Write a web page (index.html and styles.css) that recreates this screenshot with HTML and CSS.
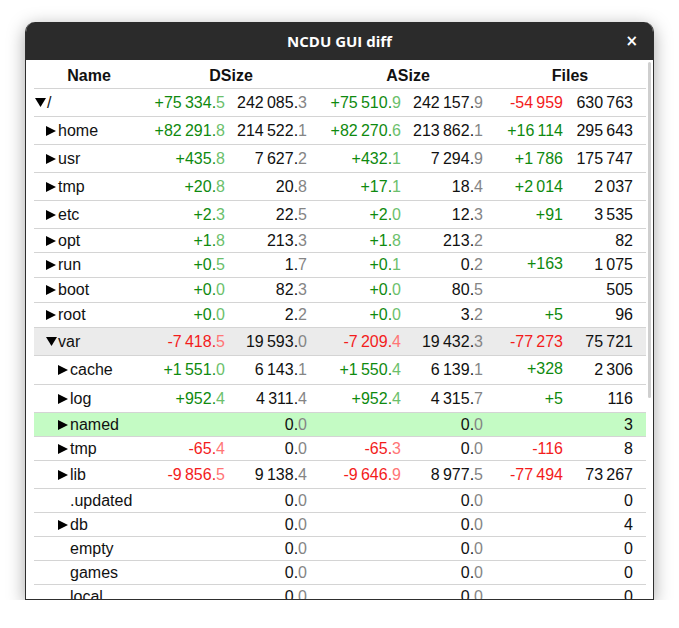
FILE: index.html
```html
<!DOCTYPE html>
<html lang="en">
<head>
    <meta charset="UTF-8">
    <meta name="viewport" content="width=device-width, initial-scale=1.0">
    <title>NCDU GUI diff</title>
    <link rel="stylesheet" href="styles.css">
</head>
<body>
    <div class="window">
        <div class="titlebar">
            <span></span>
            <span class="title">NCDU GUI diff</span>
            <span class="close">×</span>
        </div>

        <div class="content">
            <div class="tree">
                <div class="row head">
                    <div class="h-name">Name</div>
                    <div class="h-dsize">DSize</div>
                    <div class="h-asize">ASize</div>
                    <div class="h-files">Files</div>
                </div>

                <div class="row tall">
                    <div class="name"><span class="exp"><svg width="11" height="9" viewBox="0 0 11 9"><polygon points="0,0 11,0 5.5,9"/></svg></span>/</div>
                    <div class="c pos">+75&thinsp;334.<span class="fr">5</span></div>
                    <div class="c">242&thinsp;085.<span class="fr">3</span></div>
                    <div class="c pos">+75&thinsp;510.<span class="fr">9</span></div>
                    <div class="c">242&thinsp;157.<span class="fr">9</span></div>
                    <div class="c neg">-54&thinsp;959</div>
                    <div class="c">630&thinsp;763</div>
                </div>

                <div class="row tall">
                    <div class="name lvl1"><span class="exp"><svg width="10" height="10" viewBox="0 0 10 10"><polygon points="0,0 10,5 0,10"/></svg></span>home</div>
                    <div class="c pos">+82&thinsp;291.<span class="fr">8</span></div>
                    <div class="c">214&thinsp;522.<span class="fr">1</span></div>
                    <div class="c pos">+82&thinsp;270.<span class="fr">6</span></div>
                    <div class="c">213&thinsp;862.<span class="fr">1</span></div>
                    <div class="c pos">+16&thinsp;114</div>
                    <div class="c">295&thinsp;643</div>
                </div>

                <div class="row tall">
                    <div class="name lvl1"><span class="exp"><svg width="10" height="10" viewBox="0 0 10 10"><polygon points="0,0 10,5 0,10"/></svg></span>usr</div>
                    <div class="c pos">+435.<span class="fr">8</span></div>
                    <div class="c">7&thinsp;627.<span class="fr">2</span></div>
                    <div class="c pos">+432.<span class="fr">1</span></div>
                    <div class="c">7&thinsp;294.<span class="fr">9</span></div>
                    <div class="c pos">+1&thinsp;786</div>
                    <div class="c">175&thinsp;747</div>
                </div>

                <div class="row tall">
                    <div class="name lvl1"><span class="exp"><svg width="10" height="10" viewBox="0 0 10 10"><polygon points="0,0 10,5 0,10"/></svg></span>tmp</div>
                    <div class="c pos">+20.<span class="fr">8</span></div>
                    <div class="c">20.<span class="fr">8</span></div>
                    <div class="c pos">+17.<span class="fr">1</span></div>
                    <div class="c">18.<span class="fr">4</span></div>
                    <div class="c pos">+2&thinsp;014</div>
                    <div class="c">2&thinsp;037</div>
                </div>

                <div class="row tall">
                    <div class="name lvl1"><span class="exp"><svg width="10" height="10" viewBox="0 0 10 10"><polygon points="0,0 10,5 0,10"/></svg></span>etc</div>
                    <div class="c pos">+2.<span class="fr">3</span></div>
                    <div class="c">22.<span class="fr">5</span></div>
                    <div class="c pos">+2.<span class="fr">0</span></div>
                    <div class="c">12.<span class="fr">3</span></div>
                    <div class="c pos">+91</div>
                    <div class="c">3&thinsp;535</div>
                </div>

                <div class="row">
                    <div class="name lvl1"><span class="exp"><svg width="10" height="10" viewBox="0 0 10 10"><polygon points="0,0 10,5 0,10"/></svg></span>opt</div>
                    <div class="c pos">+1.<span class="fr">8</span></div>
                    <div class="c">213.<span class="fr">3</span></div>
                    <div class="c pos">+1.<span class="fr">8</span></div>
                    <div class="c">213.<span class="fr">2</span></div>
                    <div class="c"></div>
                    <div class="c">82</div>
                </div>

                <div class="row mid">
                    <div class="name lvl1"><span class="exp"><svg width="10" height="10" viewBox="0 0 10 10"><polygon points="0,0 10,5 0,10"/></svg></span>run</div>
                    <div class="c pos">+0.<span class="fr">5</span></div>
                    <div class="c">1.<span class="fr">7</span></div>
                    <div class="c pos">+0.<span class="fr">1</span></div>
                    <div class="c">0.<span class="fr">2</span></div>
                    <div class="c pos up">+163</div>
                    <div class="c">1&thinsp;075</div>
                </div>

                <div class="row mid">
                    <div class="name lvl1"><span class="exp"><svg width="10" height="10" viewBox="0 0 10 10"><polygon points="0,0 10,5 0,10"/></svg></span>boot</div>
                    <div class="c pos">+0.<span class="fr">0</span></div>
                    <div class="c">82.<span class="fr">3</span></div>
                    <div class="c pos">+0.<span class="fr">0</span></div>
                    <div class="c">80.<span class="fr">5</span></div>
                    <div class="c"></div>
                    <div class="c">505</div>
                </div>

                <div class="row mid">
                    <div class="name lvl1"><span class="exp"><svg width="10" height="10" viewBox="0 0 10 10"><polygon points="0,0 10,5 0,10"/></svg></span>root</div>
                    <div class="c pos">+0.<span class="fr">0</span></div>
                    <div class="c">2.<span class="fr">2</span></div>
                    <div class="c pos">+0.<span class="fr">0</span></div>
                    <div class="c">3.<span class="fr">2</span></div>
                    <div class="c pos">+5</div>
                    <div class="c">96</div>
                </div>

                <div class="row tall selected">
                    <div class="name lvl1"><span class="exp"><svg width="11" height="9" viewBox="0 0 11 9"><polygon points="0,0 11,0 5.5,9"/></svg></span>var</div>
                    <div class="c neg">-7&thinsp;418.<span class="fr">5</span></div>
                    <div class="c">19&thinsp;593.<span class="fr">0</span></div>
                    <div class="c neg">-7&thinsp;209.<span class="fr">4</span></div>
                    <div class="c">19&thinsp;432.<span class="fr">3</span></div>
                    <div class="c neg">-77&thinsp;273</div>
                    <div class="c">75&thinsp;721</div>
                </div>

                <div class="row taller">
                    <div class="name lvl2"><span class="exp"><svg width="10" height="10" viewBox="0 0 10 10"><polygon points="0,0 10,5 0,10"/></svg></span>cache</div>
                    <div class="c pos">+1&thinsp;551.<span class="fr">0</span></div>
                    <div class="c">6&thinsp;143.<span class="fr">1</span></div>
                    <div class="c pos">+1&thinsp;550.<span class="fr">4</span></div>
                    <div class="c">6&thinsp;139.<span class="fr">1</span></div>
                    <div class="c pos up">+328</div>
                    <div class="c">2&thinsp;306</div>
                </div>

                <div class="row tall">
                    <div class="name lvl2"><span class="exp"><svg width="10" height="10" viewBox="0 0 10 10"><polygon points="0,0 10,5 0,10"/></svg></span>log</div>
                    <div class="c pos">+952.<span class="fr">4</span></div>
                    <div class="c">4&thinsp;311.<span class="fr">4</span></div>
                    <div class="c pos">+952.<span class="fr">4</span></div>
                    <div class="c">4&thinsp;315.<span class="fr">7</span></div>
                    <div class="c pos">+5</div>
                    <div class="c">116</div>
                </div>

                <div class="row added">
                    <div class="name lvl2"><span class="exp"><svg width="10" height="10" viewBox="0 0 10 10"><polygon points="0,0 10,5 0,10"/></svg></span>named</div>
                    <div class="c"></div>
                    <div class="c">0.<span class="fr">0</span></div>
                    <div class="c"></div>
                    <div class="c">0.<span class="fr">0</span></div>
                    <div class="c"></div>
                    <div class="c">3</div>
                </div>

                <div class="row">
                    <div class="name lvl2"><span class="exp"><svg width="10" height="10" viewBox="0 0 10 10"><polygon points="0,0 10,5 0,10"/></svg></span>tmp</div>
                    <div class="c neg">-65.<span class="fr">4</span></div>
                    <div class="c">0.<span class="fr">0</span></div>
                    <div class="c neg">-65.<span class="fr">3</span></div>
                    <div class="c">0.<span class="fr">0</span></div>
                    <div class="c neg">-116</div>
                    <div class="c">8</div>
                </div>

                <div class="row tall">
                    <div class="name lvl2"><span class="exp"><svg width="10" height="10" viewBox="0 0 10 10"><polygon points="0,0 10,5 0,10"/></svg></span>lib</div>
                    <div class="c neg">-9&thinsp;856.<span class="fr">5</span></div>
                    <div class="c">9&thinsp;138.<span class="fr">4</span></div>
                    <div class="c neg">-9&thinsp;646.<span class="fr">9</span></div>
                    <div class="c">8&thinsp;977.<span class="fr">5</span></div>
                    <div class="c neg">-77&thinsp;494</div>
                    <div class="c">73&thinsp;267</div>
                </div>

                <div class="row">
                    <div class="name lvl2"><span class="exp"></span>.updated</div>
                    <div class="c"></div>
                    <div class="c">0.<span class="fr">0</span></div>
                    <div class="c"></div>
                    <div class="c">0.<span class="fr">0</span></div>
                    <div class="c"></div>
                    <div class="c">0</div>
                </div>

                <div class="row">
                    <div class="name lvl2"><span class="exp"><svg width="10" height="10" viewBox="0 0 10 10"><polygon points="0,0 10,5 0,10"/></svg></span>db</div>
                    <div class="c"></div>
                    <div class="c">0.<span class="fr">0</span></div>
                    <div class="c"></div>
                    <div class="c">0.<span class="fr">0</span></div>
                    <div class="c"></div>
                    <div class="c">4</div>
                </div>

                <div class="row">
                    <div class="name lvl2"><span class="exp"></span>empty</div>
                    <div class="c"></div>
                    <div class="c">0.<span class="fr">0</span></div>
                    <div class="c"></div>
                    <div class="c">0.<span class="fr">0</span></div>
                    <div class="c"></div>
                    <div class="c">0</div>
                </div>

                <div class="row">
                    <div class="name lvl2"><span class="exp"></span>games</div>
                    <div class="c"></div>
                    <div class="c">0.<span class="fr">0</span></div>
                    <div class="c"></div>
                    <div class="c">0.<span class="fr">0</span></div>
                    <div class="c"></div>
                    <div class="c">0</div>
                </div>

                <div class="row">
                    <div class="name lvl2"><span class="exp"></span>local</div>
                    <div class="c"></div>
                    <div class="c">0.<span class="fr">0</span></div>
                    <div class="c"></div>
                    <div class="c">0.<span class="fr">0</span></div>
                    <div class="c"></div>
                    <div class="c">0</div>
                </div>
            </div>

            <div class="scrollbar"></div>
        </div>
    </div>
</body>
</html>
```

FILE: styles.css
```css
* {
    margin: 0;
    padding: 0;
    box-sizing: border-box;
}

body {
    background: #fff;
    font-family: 'Liberation Sans', Arial, sans-serif;
    color: #111;
}

.window {
    width: 629px;
    height: 578px;
    margin: 22px 0 0 25px;
    background: #fff;
    border: 1px solid #2e2e2e;
    border-top: none;
    border-radius: 10px 10px 0 0;
    box-shadow: 0 4px 18px rgba(0, 0, 0, 0.35);
    overflow: hidden;
}

.titlebar {
    display: grid;
    grid-template-columns: 1fr auto 1fr;
    align-items: center;
    height: 38px;
    background: #2b2b2b;
    color: #fff;
}

.title {
    font-family: 'Open Sans', 'Noto Sans', sans-serif;
    font-weight: 700;
    font-size: 15px;
}

.close {
    justify-self: end;
    padding-right: 15px;
    font-family: 'DejaVu Sans', sans-serif;
    font-weight: 700;
    font-size: 15px;
}

.content {
    position: relative;
    height: 539px;
    padding: 0 7px 0 8px;
    overflow: hidden;
}

.row {
    display: grid;
    grid-template-columns: 117px 78px 82px 94px 82px 80px 70px;
    align-items: center;
    height: 24px;
    border-bottom: 1px solid #d4d4d4;
    font-size: 16px;
    white-space: nowrap;
}

.row.mid { height: 25px; }
.row.tall { height: 28px; }
.row.taller { height: 29px; }
.row.selected { background: #ebebeb; }
.row.added { background: #c4fbc4; }

.head {
    height: 29px;
    font-weight: 700;
    padding-top: 3px;
}

.h-name {
    text-align: center;
    padding-right: 7px;
}

.h-dsize {
    grid-column: span 2;
    text-align: center;
}

.h-asize {
    grid-column: span 2;
    text-align: center;
    padding-left: 18px;
}

.h-files {
    grid-column: span 2;
    text-align: center;
    padding-left: 16px;
}

.name {
    display: flex;
    align-items: center;
    padding-left: 1px;
}

.name.lvl1 { padding-left: 12px; }
.name.lvl2 { padding-left: 24px; }

.exp {
    display: inline-flex;
    align-items: center;
    width: 12px;
    flex-shrink: 0;
}

.exp svg {
    display: block;
    fill: #000;
}

.c {
    text-align: right;
    padding-right: 4px;
}

.c.up { margin-top: -3px; }

.fr { color: #858585; }

.pos { color: #0f8a0f; }
.pos .fr { color: #6cbf6c; }

.neg { color: #f31c1c; }
.neg .fr { color: #ff7676; }

.scrollbar {
    position: absolute;
    top: 2px;
    right: 2px;
    width: 3px;
    height: 336px;
    background: #cfcfcf;
    border-radius: 2px;
}
```
